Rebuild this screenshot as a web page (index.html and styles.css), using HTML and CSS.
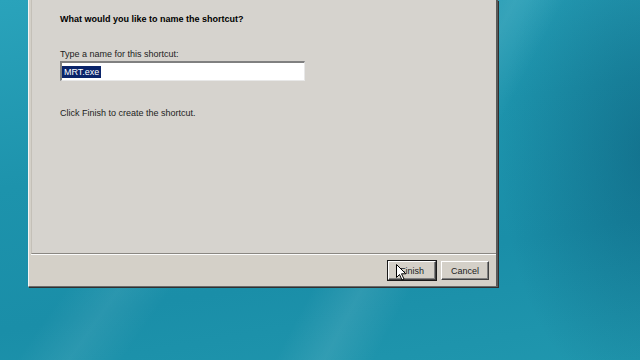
FILE: index.html
```html
<!DOCTYPE html>
<html>
<head>
    <title>Create Shortcut</title>
    <link rel="stylesheet" href="styles.css">
</head>
<body>
    <div class="desktop">
        <div class="dialog">
            <div class="wizard-page">
                <h1 class="page-title">What would you like to name the shortcut?</h1>
                <label class="field-label" for="shortcut_name">Type a name for this shortcut:</label>
                <div class="name-box" id="shortcut_name"><span class="selected">MRT.exe</span></div>
                <p class="hint">Click Finish to create the shortcut.</p>
            </div>
            <div class="button-bar">
                <button class="btn btn-default">Finish<svg class="cursor" width="11" height="17" viewBox="0 0 11 17"><path d="M0.5 0.5 L0.5 13.5 L3.5 10.5 L6 16 L8 15 L5.5 9.8 L9.8 9.8 Z" fill="#fff" stroke="#000" stroke-width="1"/></svg></button>
                <button class="btn">Cancel</button>
            </div>
        </div>
    </div>
</body>
</html>
```

FILE: styles.css
```css
body { margin: 0; font-family: "Liberation Sans", Arial, sans-serif; }
.desktop {
    width: 640px;
    height: 360px;
    overflow: hidden;
    background:
        linear-gradient(118deg, rgba(255,255,255,0) 56%, rgba(255,255,255,0.09) 62%, rgba(255,255,255,0) 68%),
        linear-gradient(125deg, rgba(255,255,255,0) 30%, rgba(255,255,255,0.07) 36%, rgba(255,255,255,0) 42%),
        radial-gradient(ellipse 150px 260px at 650px 150px, rgba(6,70,100,0.4), rgba(6,70,100,0)),
        linear-gradient(170deg, #2aa3bb 0%, #1d93ac 40%, #1a8ea8 70%, #2097ae 100%);
}
.dialog {
    margin-left: 28px;
    width: 467px;
    background: #d4d0c8;
    border-left: 1px solid #f4f4f4;
    border-right: 2px solid #5a5a5a;
    border-bottom: 1px solid #6a6a6a;
    box-shadow: 1px 1px 0 #303030;
}
.wizard-page {
    height: 254px;
    box-sizing: border-box;
    margin-left: 2px;
    padding: 14px 0 0 28px;
    background: #d6d3ce;
    border-left: 1px solid #c4c0b8;
    border-bottom: 1px solid #8a8782;
    box-shadow: 0 1px 0 #fbfbfb;
}
.page-title {
    margin: 0 0 25px;
    font-size: 9px;
    font-weight: bold;
    color: #000;
}
.field-label {
    display: block;
    font-size: 9px;
    color: #222;
    margin-bottom: 2px;
}
.name-box {
    width: 245px;
    height: 20px;
    box-sizing: border-box;
    display: flex;
    align-items: center;
    background: #fff;
    border-top: 2px solid #808080;
    border-left: 2px solid #808080;
    border-right: 1px solid #e8e8e8;
    border-bottom: 1px solid #e8e8e8;
}
.selected {
    background: #0a246a;
    color: #fff;
    font-size: 9px;
    line-height: 12px;
    padding: 0 2px;
}
.hint {
    margin: 27px 0 0;
    font-size: 9px;
    color: #222;
}
.button-bar {
    height: 32px;
    box-sizing: border-box;
    display: flex;
    justify-content: flex-end;
    align-items: flex-start;
    gap: 5px;
    padding: 7px 7px 0 0;
}
.btn {
    position: relative;
    width: 48px;
    height: 19px;
    padding: 0;
    font-family: inherit;
    font-size: 9px;
    color: #222;
    background: #d4d0c8;
    border: 1px solid;
    border-color: #fff #404040 #404040 #fff;
    box-shadow: inset -1px -1px 0 #808080;
}
.btn-default {
    outline: 1px solid #1a1a1a;
    outline-offset: 0;
}
.cursor {
    position: absolute;
    left: 7px;
    top: 2px;
}
```
